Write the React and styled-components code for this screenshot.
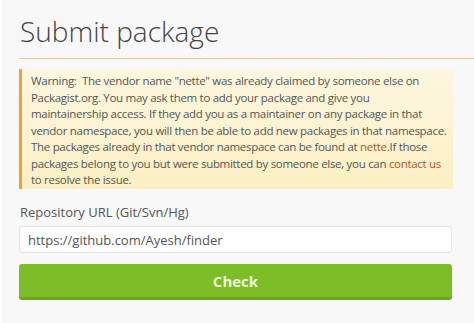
import React from "react";
import styled, { createGlobalStyle } from "styled-components";

const Global = createGlobalStyle`
  html, body { margin: 0; padding: 0; background: #fff; }
  body { font-family: "Open Sans", "Liberation Sans", sans-serif; }
`;

const Page = styled.div`
  width: 472px;
  height: 323px;
  margin-left: 2px;
  background: #f8f8f8;
  box-sizing: border-box;
  padding: 13px 0 0 17px;
`;

const Title = styled.h1`
  margin: 0;
  padding: 0 0 8px 1px;
  font-size: 28px;
  font-weight: 300;
  line-height: 37px;
  color: #444;
  border-bottom: 1px solid #eccb95;
`;

const Body = styled.div`
  width: 434px;
  padding-top: 10px;
`;

const Warning = styled.div`
  box-sizing: border-box;
  height: 120px;
  padding: 4px 6px 0 9px;
  border-left: 3px solid #f0a03a;
  background: linear-gradient(to bottom, #fdf7e0, #fcefc3);
  font-size: 11.5px;
  letter-spacing: -0.3px;
  line-height: 16.5px;
  color: #555;
`;

const Line = styled.span`
  display: block;
  white-space: pre;
`;

const Link = styled.a`
  color: #b4562a;
  text-decoration: none;
`;

const Label = styled.label`
  display: block;
  margin: 14px 0 5px 1px;
  font-size: 13px;
  line-height: 18px;
  color: #555;
`;

const Input = styled.input`
  display: block;
  box-sizing: border-box;
  width: 433px;
  height: 27px;
  padding: 0 8px;
  border: 1px solid #e4e4e4;
  border-radius: 3px;
  background: #fff;
  font-family: "Open Sans", "Liberation Sans", sans-serif;
  font-size: 13px;
  color: #555;
  outline: none;
`;

const Button = styled.button`
  display: block;
  box-sizing: border-box;
  width: 433px;
  height: 36px;
  margin-top: 11px;
  border: none;
  border-bottom: 3px solid #68a71e;
  border-radius: 3px;
  background: #7dbd28;
  color: #eef8df;
  font-family: "Open Sans", "Liberation Sans", sans-serif;
  font-size: 15px;
  font-weight: 700;
  padding: 0;
`;

export default function App() {
  return (
    <>
      <Global />
      <Page>
        <Title>Submit package</Title>
        <Body>
          <Warning>
            <Line>Warning:  The vendor name "nette" was already claimed by someone else on</Line>
            <Line>Packagist.org. You may ask them to add your package and give you</Line>
            <Line>maintainership access. If they add you as a maintainer on any package in that</Line>
            <Line>vendor namespace, you will then be able to add new packages in that namespace.</Line>
            <Line>
              The packages already in that vendor namespace can be found at <Link href="#">nette</Link>.If those
            </Line>
            <Line>
              packages belong to you but were submitted by someone else, you can <Link href="#">contact us</Link>
            </Line>
            <Line>to resolve the issue.</Line>
          </Warning>
          <Label>Repository URL (Git/Svn/Hg)</Label>
          <Input defaultValue="https://github.com/Ayesh/finder" />
          <Button>Check</Button>
        </Body>
      </Page>
    </>
  );
}
